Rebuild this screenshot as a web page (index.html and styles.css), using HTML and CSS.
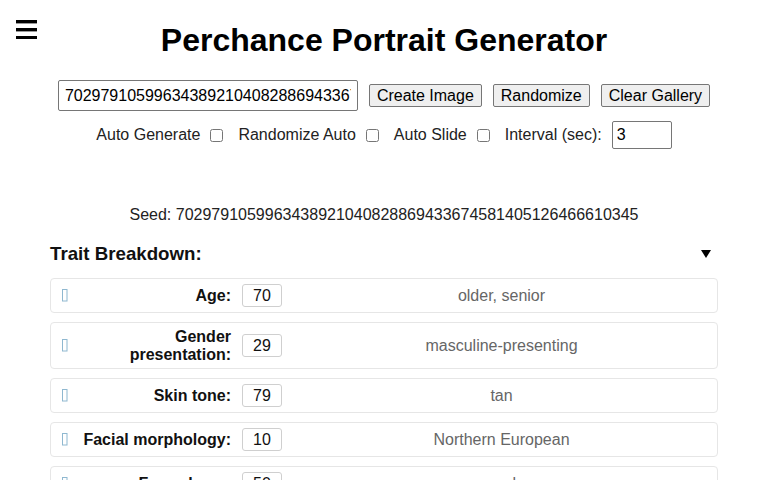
FILE: index.html
```html
<!DOCTYPE html>
<html lang="en">
<head>
<meta charset="utf-8">
<title>Perchance Portrait Generator</title>
<link rel="stylesheet" href="styles.css">
</head>
<body>
<button class="menu-btn" aria-label="Menu">
  <svg width="22" height="22" viewBox="0 0 22 22"><rect x="0" y="3" width="21" height="3.4" fill="#000"/><rect x="0" y="11" width="21" height="3.4" fill="#000"/><rect x="0" y="19" width="21" height="3.4" fill="#000"/></svg>
</button>
<h1 class="title">Perchance Portrait Generator</h1>
<div class="controls">
  <input class="seed-input" type="text" value="7029791059963438921040828869433674581405126466610345">
  <button class="btn">Create Image</button>
  <button class="btn">Randomize</button>
  <button class="btn">Clear Gallery</button>
</div>
<div class="options">
  <label class="opt">Auto Generate <input type="checkbox"></label>
  <label class="opt">Randomize Auto <input type="checkbox"></label>
  <label class="opt">Auto Slide <input type="checkbox"></label>
  <label class="opt">Interval (sec): <input class="interval" type="number" value="3"></label>
</div>
<div class="gallery"></div>
<p class="seed">Seed: 7029791059963438921040828869433674581405126466610345</p>
<section class="traits">
  <div class="traits-head">
    <h3>Trait Breakdown:</h3>
    <span class="toggle"><svg width="10" height="8" viewBox="0 0 10 8"><polygon points="0,0 10,0 5,8" fill="#000"/></svg></span>
  </div>
  <div class="trait-list">
    <div class="trait">
      <span class="lock"><svg width="6" height="13" viewBox="0 0 6 13"><rect x="0.5" y="0.5" width="4.5" height="11.5" fill="none" stroke="#8fb8d0" stroke-width="1"/></svg></span>
      <span class="label">Age:</span>
      <input class="val" type="text" value="70">
      <span class="desc">older, senior</span>
    </div>
    <div class="trait">
      <span class="lock"><svg width="6" height="13" viewBox="0 0 6 13"><rect x="0.5" y="0.5" width="4.5" height="11.5" fill="none" stroke="#8fb8d0" stroke-width="1"/></svg></span>
      <span class="label">Gender presentation:</span>
      <input class="val" type="text" value="29">
      <span class="desc">masculine-presenting</span>
    </div>
    <div class="trait">
      <span class="lock"><svg width="6" height="13" viewBox="0 0 6 13"><rect x="0.5" y="0.5" width="4.5" height="11.5" fill="none" stroke="#8fb8d0" stroke-width="1"/></svg></span>
      <span class="label">Skin tone:</span>
      <input class="val" type="text" value="79">
      <span class="desc">tan</span>
    </div>
    <div class="trait">
      <span class="lock"><svg width="6" height="13" viewBox="0 0 6 13"><rect x="0.5" y="0.5" width="4.5" height="11.5" fill="none" stroke="#8fb8d0" stroke-width="1"/></svg></span>
      <span class="label">Facial morphology:</span>
      <input class="val" type="text" value="10">
      <span class="desc">Northern European</span>
    </div>
    <div class="trait">
      <span class="lock"><svg width="6" height="13" viewBox="0 0 6 13"><rect x="0.5" y="0.5" width="4.5" height="11.5" fill="none" stroke="#8fb8d0" stroke-width="1"/></svg></span>
      <span class="label">Face shape:</span>
      <input class="val" type="text" value="50">
      <span class="desc">oval</span>
    </div>
  </div>
</section>
</body>
</html>
```
FILE: styles.css
```css
html, body {
  margin: 0;
  padding: 0;
  background: #fff;
}
body {
  font-family: "Liberation Sans", Arial, sans-serif;
  font-size: 16px;
  color: #000;
}
.menu-btn {
  position: absolute;
  top: 16px;
  left: 16px;
  padding: 0;
  margin: 0;
  border: 0;
  background: transparent;
  width: 22px;
  height: 24px;
  line-height: 0;
}
.title {
  margin: 22px 0 21px;
  font-size: 32px;
  line-height: 37px;
  font-weight: bold;
  text-align: center;
}
.controls {
  display: flex;
  justify-content: center;
  align-items: center;
  gap: 11px;
}
.seed-input {
  box-sizing: border-box;
  width: 300px;
  height: 31px;
  padding: 0 6px;
  border: 1px solid #767676;
  border-radius: 2px;
  font-family: inherit;
  font-size: 16px;
  color: #000;
}
.btn {
  font-family: inherit;
  font-size: 16px;
  height: 23px;
  padding: 1px 7px;
  border: 1px solid #767676;
  border-radius: 2px;
  background: #efefef;
  color: #000;
  line-height: 18px;
}
.options {
  display: flex;
  justify-content: center;
  align-items: center;
  gap: 15px;
  margin-top: 10px;
  height: 28px;
}
.opt {
  display: flex;
  align-items: center;
  gap: 10px;
  color: #222;
}
.opt input[type="checkbox"] {
  width: 13px;
  height: 13px;
  margin: 0;
}
.interval {
  box-sizing: border-box;
  width: 60px;
  height: 28px;
  padding: 0 4px;
  margin: 0;
  border: 1px solid #767676;
  border-radius: 2px;
  font-family: inherit;
  font-size: 16px;
}
.gallery {
  height: 57px;
}
.seed {
  margin: 0;
  text-align: center;
  line-height: 18px;
  color: #222;
}
.traits {
  margin: 0 50px;
}
.traits-head {
  display: flex;
  justify-content: space-between;
  align-items: center;
  margin-top: 19px;
  margin-bottom: 13px;
}
.traits-head h3 {
  margin: 0;
  font-size: 18.72px;
  line-height: 22px;
  color: #111;
}
.toggle {
  display: flex;
  margin-right: 7px;
}
.trait-list {
  display: flex;
  flex-direction: column;
  gap: 9px;
}
.trait {
  display: flex;
  align-items: center;
  padding: 5px 6px 5px 10px;
  border: 1px solid #e6e6e6;
  border-radius: 4px;
  background: #fff;
}
.lock {
  width: 20px;
  flex: none;
  display: flex;
  padding-left: 1px;
  box-sizing: border-box;
}
.label {
  width: 150px;
  flex: none;
  text-align: right;
  font-weight: bold;
  color: #111;
  line-height: 17.5px;
}
.val {
  box-sizing: border-box;
  width: 40px;
  height: 23px;
  margin: 0 0 0 11px;
  padding: 0 2px;
  border: 1px solid #cfcfcf;
  border-radius: 3px;
  font-family: inherit;
  font-size: 16px;
  text-align: center;
  color: #111;
}
.desc {
  flex: 1;
  margin-left: 10px;
  text-align: center;
  color: #666;
}
```
